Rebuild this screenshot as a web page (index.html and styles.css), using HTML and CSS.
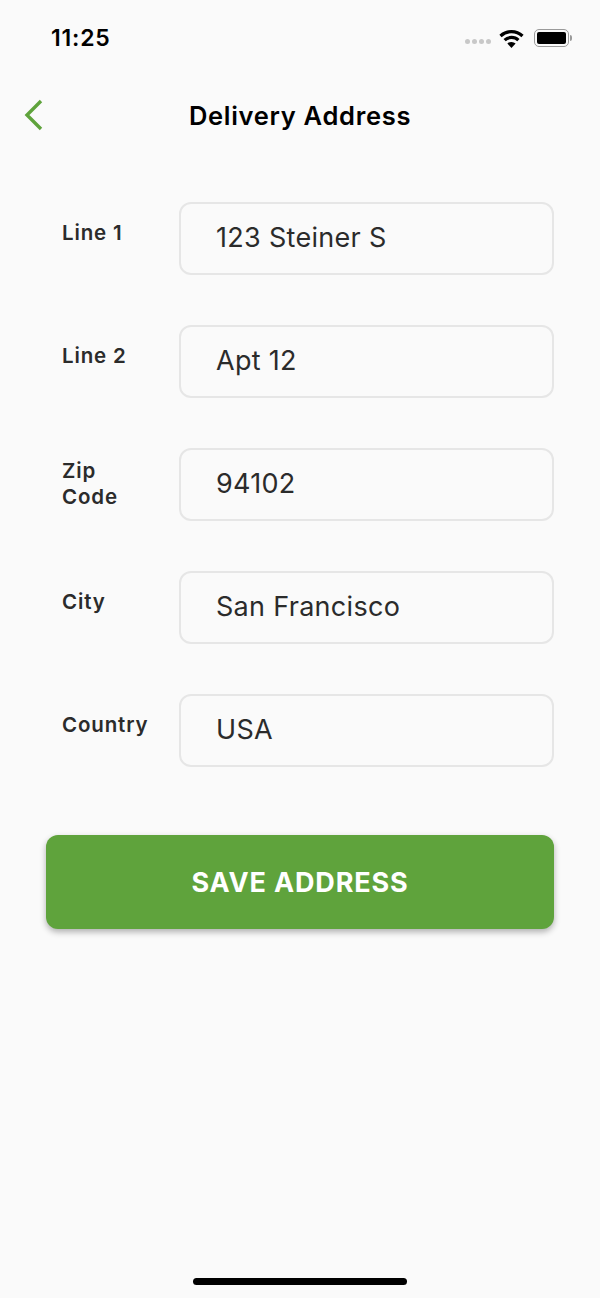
FILE: index.html
```html
<!DOCTYPE html>
<html lang="en">
<head>
  <meta charset="UTF-8">
  <title>Delivery Address</title>
  <link rel="stylesheet" href="styles.css">
</head>
<body>
  <div class="status-bar">
    <span class="time">11:25</span>
    <div class="status-icons">
      <div class="signal"><i></i><i></i><i></i><i></i></div>
      <svg class="wifi" width="25" height="19" viewBox="0 0 25 19">
        <path d="M1.5 7 A16 16 0 0 1 23.5 7" fill="none" stroke="#000" stroke-width="3.2"/>
        <path d="M5.6 11.2 A10 10 0 0 1 19.4 11.2" fill="none" stroke="#000" stroke-width="3.2"/>
        <path d="M12.5 19 L8.4 14.6 A5.8 5.8 0 0 1 16.6 14.6 Z" fill="#000"/>
      </svg>
      <div class="battery"><div class="battery-fill"></div></div>
      <div class="battery-cap"></div>
    </div>
  </div>

  <div class="nav-bar">
    <svg class="back" width="20" height="32" viewBox="0 0 20 32">
      <path d="M18 2 L4 16 L18 30" fill="none" stroke="#5fa33c" stroke-width="3.4"/>
    </svg>
    <h1 class="title">Delivery Address</h1>
  </div>

  <form class="address-form">
    <div class="field">
      <label class="field-label">Line 1</label>
      <div class="field-input">123 Steiner S</div>
    </div>
    <div class="field">
      <label class="field-label">Line 2</label>
      <div class="field-input">Apt 12</div>
    </div>
    <div class="field">
      <label class="field-label field-label-wrapped">Zip<br>Code</label>
      <div class="field-input">94102</div>
    </div>
    <div class="field">
      <label class="field-label">City</label>
      <div class="field-input">San Francisco</div>
    </div>
    <div class="field">
      <label class="field-label">Country</label>
      <div class="field-input">USA</div>
    </div>
  </form>

  <div class="save-button">SAVE ADDRESS</div>

  <div class="spacer"></div>
  <div class="home-indicator"></div>
</body>
</html>
```

FILE: styles.css
```css
html, body {
  height: 100%;
}

body {
  margin: 0;
  background-color: #fafafa;
  color: #2b2b2b;
  font-family: Inter, "Liberation Sans", sans-serif;
  display: flex;
  flex-direction: column;
  overflow: hidden;
}

.status-bar {
  height: 76px;
  box-sizing: border-box;
  padding: 24px 28px 0 51px;
  display: flex;
  justify-content: space-between;
  align-items: flex-start;
}

.time {
  font-size: 23px;
  line-height: 28px;
  font-weight: 600;
  letter-spacing: 0.8px;
  color: #000;
}

.status-icons {
  display: flex;
  align-items: center;
  height: 28px;
}

.signal {
  display: flex;
  gap: 2px;
  margin-right: 8px;
  margin-top: 6px;
}

.signal i {
  width: 5px;
  height: 5px;
  border-radius: 50%;
  background-color: #c8c8c8;
}

.wifi {
  margin-right: 10px;
}

.battery {
  width: 35px;
  height: 18px;
  box-sizing: border-box;
  border: 1.5px solid #9a9a9a;
  border-radius: 5px;
  padding: 2px;
}

.battery-fill {
  height: 100%;
  background-color: #000;
  border-radius: 2px;
}

.battery-cap {
  width: 2px;
  height: 6px;
  margin-left: 1px;
  background-color: #9a9a9a;
  border-radius: 0 2px 2px 0;
}

.nav-bar {
  height: 78px;
  position: relative;
  display: flex;
  align-items: center;
  justify-content: center;
}

.back {
  position: absolute;
  left: 23px;
  top: 23px;
}

.title {
  margin: 0;
  font-size: 25.5px;
  font-weight: 600;
  letter-spacing: 0.7px;
  color: #000;
}

.address-form {
  margin-top: 48px;
  padding: 0 46px 0 62px;
  display: flex;
  flex-direction: column;
  gap: 50px;
}

.field {
  display: flex;
  align-items: flex-start;
}

.field-label {
  width: 117px;
  flex-shrink: 0;
  padding-top: 18px;
  font-size: 20.5px;
  line-height: 26px;
  font-weight: 600;
  letter-spacing: 0.85px;
  color: #2b2b2b;
}

.field-label-wrapped {
  padding-top: 10px;
}

.field-input {
  flex: 1;
  height: 73px;
  box-sizing: border-box;
  padding-left: 35px;
  border: 2px solid #e6e6e6;
  border-radius: 12px;
  font-size: 27px;
  line-height: 67px;
  letter-spacing: 0.3px;
  color: #2b2b2b;
}

.save-button {
  margin: 68px 46px 0;
  height: 94px;
  border-radius: 12px;
  background-color: #5fa33c;
  box-shadow: 0 3px 6px rgba(0, 0, 0, 0.3);
  color: #fff;
  font-size: 27px;
  font-weight: 700;
  line-height: 96px;
  letter-spacing: 0.85px;
  text-align: center;
}

.spacer {
  flex: 1;
}

.home-indicator {
  width: 214px;
  height: 7px;
  margin: 0 auto 13px;
  border-radius: 4px;
  background-color: #000;
}
```
